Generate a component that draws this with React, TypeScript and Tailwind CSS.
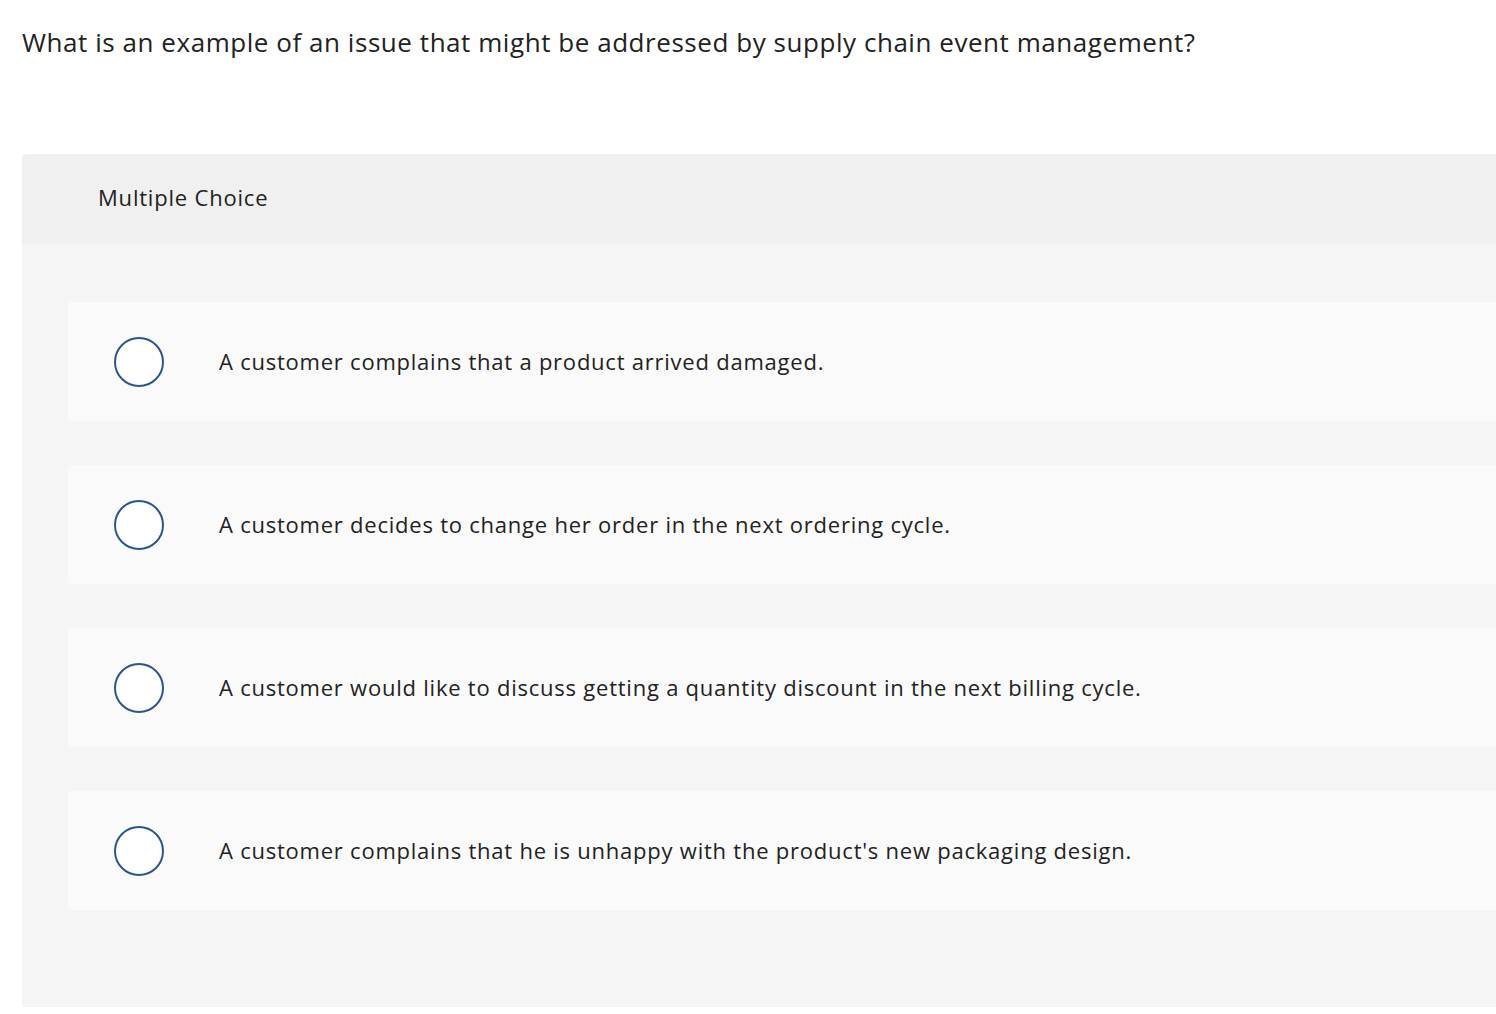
import React from 'react';

const options = [
  'A customer complains that a product arrived damaged.',
  'A customer decides to change her order in the next ordering cycle.',
  'A customer would like to discuss getting a quantity discount in the next billing cycle.',
  "A customer complains that he is unhappy with the product's new packaging design.",
];

export default function App() {
  return (
    <div className="min-h-[1014px] w-[1496px] overflow-hidden bg-white text-[#222] font-['Open_Sans','Liberation_Sans',sans-serif]">
      <div className="px-[22px] pt-[25px]">
        <h1 className="text-[26px] leading-[34px] font-normal tracking-[0.55px]">
          What is an example of an issue that might be addressed by supply chain event management?
        </h1>
      </div>

      <div className="ml-[22px] mt-[95px] w-[1520px] rounded-[4px] bg-[#f5f5f5]">
        <div className="flex h-[90px] items-center rounded-t-[4px] bg-[#f0f0f0] pb-[4px] pl-[76px]">
          <span className="text-[22px] tracking-[0.8px] text-[#222]">Multiple Choice</span>
        </div>
        <div className="flex flex-col gap-[44px] pb-[97px] pl-[46px] pt-[58px]">
          {options.map((o) => (
            <div key={o} className="flex h-[119px] items-center rounded-[4px] bg-[#fafafa] pl-[46px]">
              <span className="h-[50px] w-[50px] shrink-0 rounded-full border-2 border-[#2a5591] bg-white" />
              <span className="ml-[55px] text-[22px] tracking-[0.77px] text-[#222]">{o}</span>
            </div>
          ))}
        </div>
      </div>
    </div>
  );
}
